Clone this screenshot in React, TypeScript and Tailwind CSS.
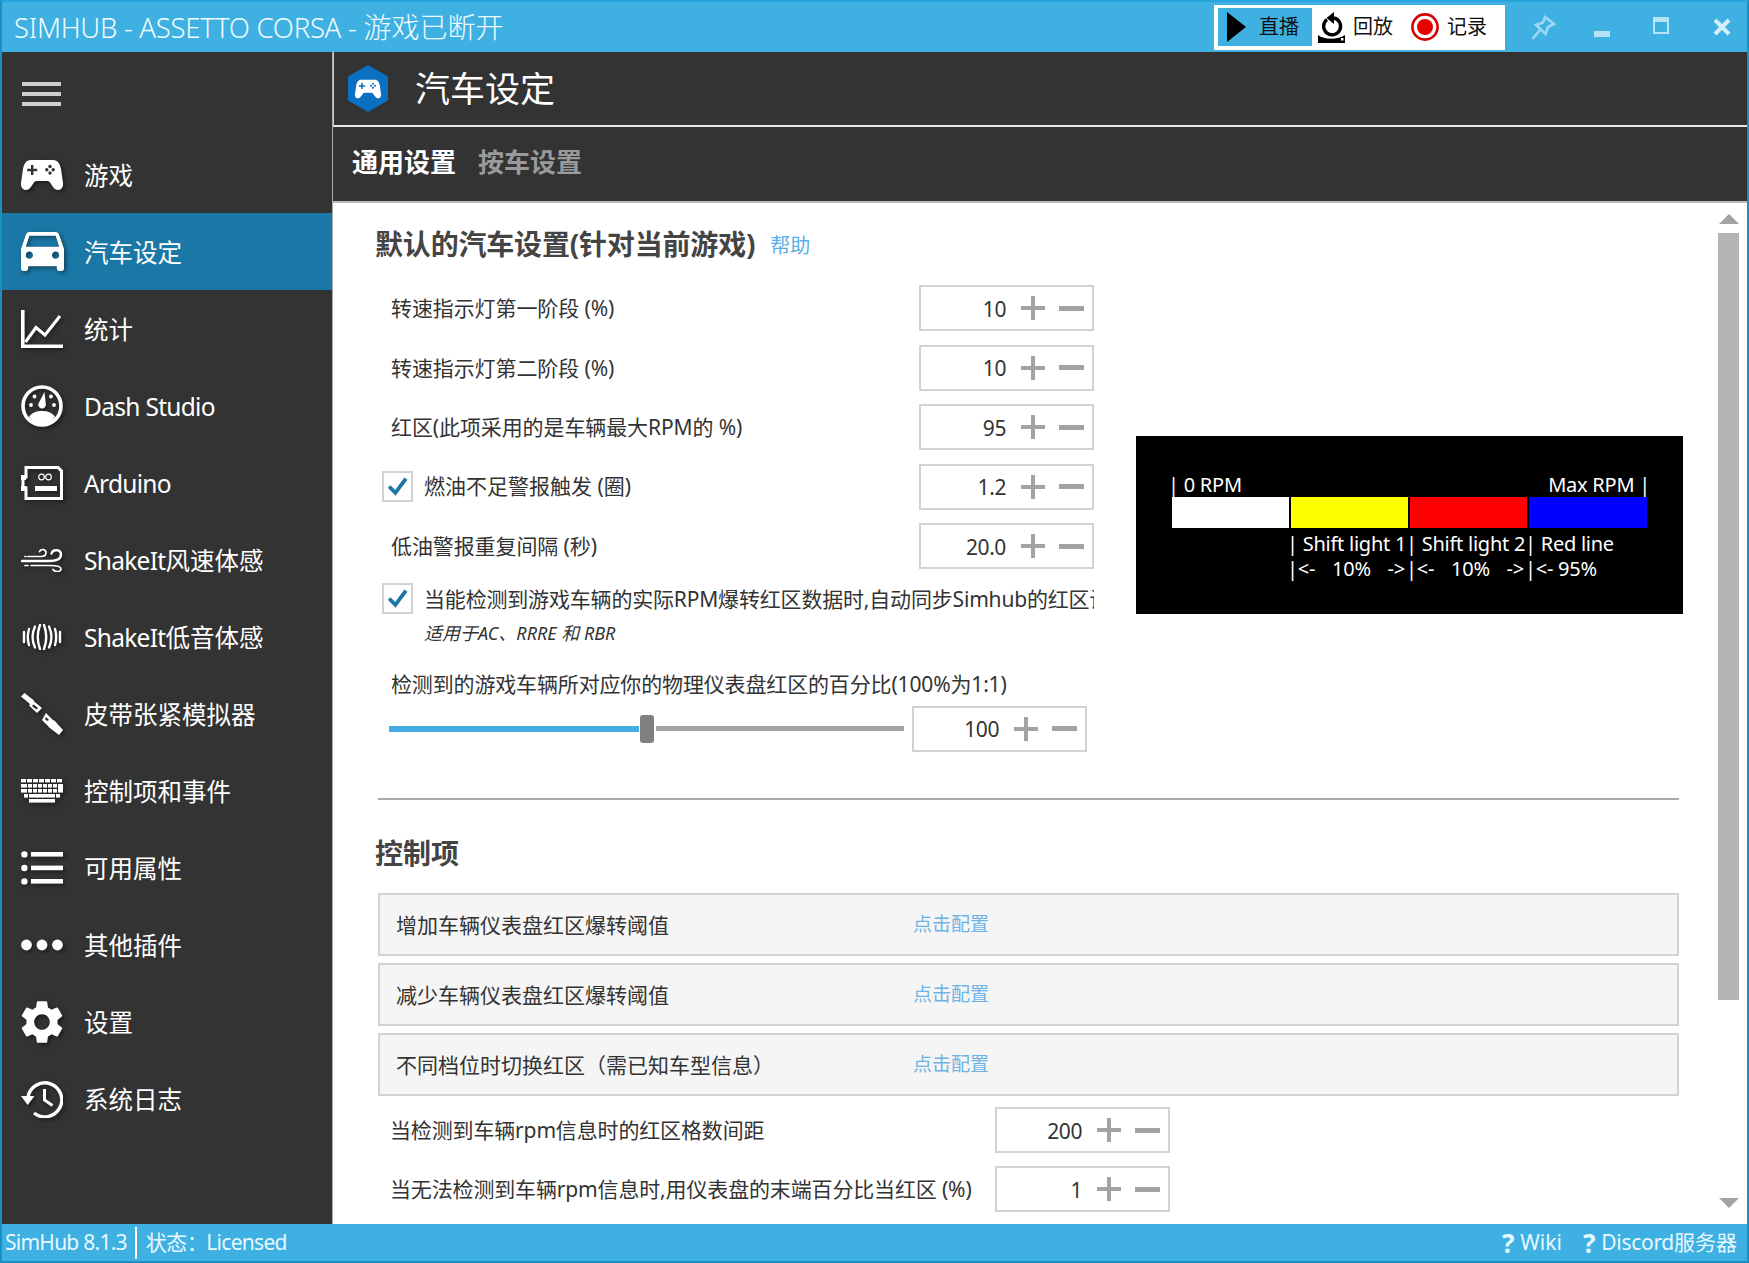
import React from 'react'
import { MdSettings } from 'react-icons/md'

const shadow = 'drop-shadow-[2px_2px_2px_rgba(0,0,0,0.45)]'

const Gamepad = ({ className, hole = '#333333' }: { className?: string; hole?: string }) => (
  <svg viewBox="0 0 42 32" className={className}>
    <path
      fill="currentColor"
      d="M10 1H32C37 1 39 5 40 10L42 24C42.5 29 40 31 37 31C34 31 32 28 30 25C29 23 28 22 26 22H16C14 22 13 23 12 25C10 28 8 31 5 31C2 31 -.5 29 0 24L2 10C3 5 5 1 10 1Z"
    />
    <path fill={hole} d="M10 6h2.4v3.8h3.8v2.4h-3.8V16H10v-3.8H6.2V9.8H10z" />
    <circle cx="29" cy="7.5" r="1.7" fill={hole} />
    <circle cx="29" cy="14" r="1.7" fill={hole} />
    <circle cx="25.8" cy="10.8" r="1.7" fill={hole} />
    <circle cx="32.2" cy="10.8" r="1.7" fill={hole} />
  </svg>
)

const CarIcon = () => (
  <svg viewBox="3 5 18 16" preserveAspectRatio="none" className={`w-[43px] h-[39px] text-white ${shadow}`}>
    <path
      fill="currentColor"
      d="M18.92 6.01C18.72 5.42 18.16 5 17.5 5h-11c-.66 0-1.21.42-1.42 1.01L3 12v8c0 .55.45 1 1 1h1c.55 0 1-.45 1-1v-1h12v1c0 .55.45 1 1 1h1c.55 0 1-.45 1-1v-8l-2.08-5.99zM6.5 16c-.83 0-1.5-.67-1.5-1.5S5.67 13 6.5 13s1.5.67 1.5 1.5S7.33 16 6.5 16zm11 0c-.83 0-1.5-.67-1.5-1.5s.67-1.5 1.5-1.5 1.5.67 1.5 1.5-.67 1.5-1.5 1.5zM5 11l1.5-4.5h11L19 11H5z"
    />
  </svg>
)

const ChartIcon = () => (
  <svg viewBox="0 0 42 38" className={`w-[42px] h-[38px] text-white ${shadow}`}>
    <path fill="none" stroke="currentColor" strokeWidth="3.6" d="M1.8 0V36.2H42" />
    <path fill="none" stroke="currentColor" strokeWidth="3" d="M4.5 32L15 17.5 24 25 39 6" />
  </svg>
)

const DashIcon = () => (
  <svg viewBox="0 0 42 42" className={`w-[42px] h-[42px] text-white ${shadow}`}>
    <circle cx="21" cy="21" r="19" fill="none" stroke="currentColor" strokeWidth="3.6" />
    <path fill="currentColor" d="M8 32C11 27 16 26 21 26S31 27 34 32C30 37 26 39 21 39S12 37 8 32Z" />
    <path fill="currentColor" d="M23.5 7L24.8 19A3.8 3.8 0 1 1 18 17.5Z" />
    <circle cx="10" cy="20" r="1.9" fill="currentColor" />
    <circle cx="13.5" cy="11.5" r="1.9" fill="currentColor" />
    <circle cx="30" cy="11.5" r="1.9" fill="currentColor" />
    <circle cx="33" cy="20" r="1.9" fill="currentColor" />
  </svg>
)

const ArduinoIcon = () => (
  <svg viewBox="0 0 42 34" className={`w-[42px] h-[34px] text-white ${shadow}`}>
    <path fill="none" stroke="currentColor" strokeWidth="3" d="M5 1.6H37L40.5 5V32.4H5V22H2V11H5Z" />
    <path fill="currentColor" d="M0 9h5v5H0zM0 20h5v5H0zM14 20h22v5H14z" />
    <circle cx="20.5" cy="11" r="2.8" fill="none" stroke="currentColor" strokeWidth="1.2" />
    <circle cx="27.5" cy="11" r="2.8" fill="none" stroke="currentColor" strokeWidth="1.2" />
  </svg>
)

const WindIcon = () => (
  <svg viewBox="0 0 42 24" className={`w-[42px] h-[24px] text-white ${shadow}`}>
    <g fill="none" stroke="currentColor" strokeWidth="1.7" strokeLinecap="round">
      <path strokeWidth="2.4" d="M1 13H28C33 13 40 12 40 6.5 40 1.5 32 .5 30.5 5.5" />
      <path d="M7 8.5H20C22.5 8.5 25 7.5 25 4.5 25 1 20 .5 18.5 3.5" />
      <path d="M4 8.5H5M10 17.5H29C35 17.5 40 18 40 21 40 24 34 24.5 32 21.5M4 17.5H7" />
    </g>
  </svg>
)

const BassIcon = () => (
  <svg viewBox="0 0 40 26" className={`w-[40px] h-[26px] text-white ${shadow}`}>
    <g fill="none" stroke="currentColor" strokeWidth="2.4" strokeLinecap="round">
      <path d="M2 8V18M7 5C5.5 10 5.5 16 7 21M13 2.5C10 9 10 17 13 23.5" />
      <path d="M18 1C15 9 15 17 18 25M22 1C25 9 25 17 22 25" />
      <path d="M27 2.5C30 9 30 17 27 23.5M33 5C34.5 10 34.5 16 33 21M38 8V18" />
    </g>
  </svg>
)

const BeltIcon = () => (
  <svg viewBox="0 0 42 42" className={`w-[42px] h-[42px] text-white ${shadow}`}>
    <path fill="currentColor" d="M3.5 0L13 7.5 9.5 11.5 0 3.5Z" />
    <path fill="currentColor" fillRule="evenodd" d="M12 7.5L21 15 16 20 8 12.5ZM12.5 11.5L11 13 15.5 16.5 17 15Z" />
    <path fill="currentColor" fillRule="evenodd" d="M25 20L34 29 28 34 21 27ZM25 24L24 26 26 28 28 27Z" />
    <path fill="currentColor" d="M33 27L42 37 38 42 27.5 34Z" />
  </svg>
)

const KeyboardIcon = () => (
  <svg viewBox="0 0 42 24" className={`w-[42px] h-[24px] text-white ${shadow}`}>
    <g fill="currentColor">
      {[0, 6, 12, 18, 24, 30, 36].map((x) => (
        <rect key={x} x={x} y="0" width="5" height="3.4" />
      ))}
      {[0, 7, 12, 17, 22, 27, 32].map((x, i) => (
        <rect key={x} x={x} y="5" width={i === 0 ? 6 : 4} height="3.6" />
      ))}
      <rect x="37" y="5" width="5" height="8.6" />
      <rect x="0" y="10" width="6" height="3.6" />
      {[7, 12, 17, 22, 27, 32].map((x) => (
        <rect key={x} x={x} y="10" width="4" height="3.6" />
      ))}
      <rect x="3" y="15" width="4" height="3.6" />
      <rect x="8" y="15" width="26" height="3.6" />
      <rect x="35" y="15" width="4" height="3.6" />
      <rect x="8" y="20" width="26" height="3.6" />
    </g>
  </svg>
)

const ListIcon = () => (
  <svg viewBox="0 0 42 34" className={`w-[42px] h-[34px] text-white ${shadow}`}>
    <g fill="currentColor">
      <circle cx="3.4" cy="3.4" r="3.2" />
      <circle cx="3.4" cy="17" r="3.2" />
      <circle cx="3.4" cy="30.4" r="3.2" />
      <rect x="10" y="1" width="32" height="4.6" />
      <rect x="10" y="14.6" width="32" height="4.6" />
      <rect x="10" y="28" width="32" height="4.6" />
    </g>
  </svg>
)

const DotsIcon = () => (
  <svg viewBox="0 0 42 12" className={`w-[42px] h-[12px] text-white ${shadow}`}>
    <circle cx="5.5" cy="6" r="5.4" fill="currentColor" />
    <circle cx="21" cy="6" r="5.4" fill="currentColor" />
    <circle cx="36.5" cy="6" r="5.4" fill="currentColor" />
  </svg>
)

const HistoryIcon = () => (
  <svg viewBox="0 0 42 38" className={`w-[42px] h-[38px] text-white ${shadow}`}>
    <path fill="none" stroke="currentColor" strokeWidth="3.4" d="M7 17A17 17 0 1 1 13 33" />
    <path fill="currentColor" d="M0 16H13.5L6.7 25Z" />
    <path fill="none" stroke="currentColor" strokeWidth="3" d="M23.5 9V20L31.5 25.5" />
  </svg>
)

const navItems: { latin?: string; label: string; icon: React.ReactNode; active?: boolean }[] = [
  { label: '游戏', icon: <Gamepad className={`w-[42px] h-[32px] text-white ${shadow}`} /> },
  { label: '汽车设定', icon: <CarIcon />, active: true },
  { label: '统计', icon: <ChartIcon /> },
  { latin: 'Dash Studio', label: '', icon: <DashIcon /> },
  { latin: 'Arduino', label: '', icon: <ArduinoIcon /> },
  { latin: 'ShakeIt', label: '风速体感', icon: <WindIcon /> },
  { latin: 'ShakeIt', label: '低音体感', icon: <BassIcon /> },
  { label: '皮带张紧模拟器', icon: <BeltIcon /> },
  { label: '控制项和事件', icon: <KeyboardIcon /> },
  { label: '可用属性', icon: <ListIcon /> },
  { label: '其他插件', icon: <DotsIcon /> },
  { label: '设置', icon: <MdSettings className={`w-[52px] h-[52px] shrink-0 text-white ${shadow}`} /> },
  { label: '系统日志', icon: <HistoryIcon /> }
]

const Spinner = ({ value, className = '' }: { value: string; className?: string }) => (
  <div className={`w-[175px] h-[46px] border-2 border-[#d2d2d2] flex items-center justify-end pr-[8px] shrink-0 text-[21px] text-[#333333] tracking-[-0.4px] ${className}`}>
    <span className="pt-[3px]">{value}</span>
    <svg viewBox="0 0 24 24" className="w-[24px] h-[24px] ml-[15px]">
      <path fill="#a3a3a3" d="M10 0h4v10h10v4H14v10h-4V14H0v-4h10z" />
    </svg>
    <span className="w-[25px] h-[5px] bg-[#a3a3a3] ml-[14px]" />
  </div>
)

const SettingRow = ({ label, value }: { label: string; value: string }) => (
  <div className="flex items-center justify-between h-[46px] mb-[13.5px] pl-[16px]">
    <span className="pt-[2px] text-[21px] text-[#333333] whitespace-nowrap tracking-[-0.1px]">{label}</span>
    <Spinner value={value} />
  </div>
)

const Check = () => (
  <span className="w-[31px] h-[31px] border-2 border-[#d2d2d2] flex items-center justify-center shrink-0">
    <svg viewBox="0 0 20 18" className="w-[21px] h-[19px]">
      <path fill="none" stroke="#1b78a6" strokeWidth="3.6" d="M2 9L8 15 18 1.5" />
    </svg>
  </span>
)

const ControlRow = ({ label }: { label: string }) => (
  <div className="h-[63px] mb-[7px] ml-[3px] border-2 border-[#d2d2d2] bg-[#f5f5f5] flex items-center pl-[16px]">
    <span className="w-[517px] pt-[3px] text-[21px] text-[#333333]">{label}</span>
    <span className="pt-[1px] text-[19px] text-[#6db3e6]">点击配置</span>
  </div>
)

const RpmMarks = ({ value }: { value: string }) => (
  <span className="w-[119px] pr-[1px] flex justify-between">
    <span>|&lt;-</span>
    <span>{value}</span>
    <span>-&gt;</span>
  </span>
)

const App = () => {
  return (
    <div className="w-[1749px] h-[1263px] flex flex-col overflow-hidden bg-white border-x-2 border-t-2 border-b-2 border-x-[#1b8ec4] border-t-[#29a3dc] border-b-[#1b8ec4] font-['Noto_Sans','Noto_Sans_CJK_SC',sans-serif]">
      {/* Title bar */}
      <div className="h-[50px] shrink-0 bg-[#3eb0e2] flex items-center pl-[12px] pr-[16px]">
        <span className="text-[27.5px] font-light text-[#f2fbff] whitespace-nowrap">
          <span className="tracking-[-0.28px]">SIMHUB - ASSETTO CORSA - </span>
          <span className="text-[28px]">游戏已断开</span>
        </span>
        <div className="ml-auto w-[291px] h-[45px] bg-white flex items-center pl-[4px] text-[20px] text-[#111111]">
          <div className="w-[94px] h-[38px] bg-[#3eb0e2] flex items-center pl-[9px]">
            <svg viewBox="0 0 19 30" className="w-[19px] h-[30px]">
              <path d="M0 0L19 15 0 30z" fill="#000000" />
            </svg>
            <span className="ml-[13px]">直播</span>
          </div>
          <svg viewBox="0 0 27 32" className="w-[27px] h-[32px] ml-[6px]">
            <path fill="none" stroke="#000000" strokeWidth="3.4" d="M9 8.5A8.5 8.5 0 1 0 16 7" />
            <path d="M16 1V13L8.5 7z" fill="#000000" />
            <path d="M0 24C6 29 20 29 27 24V32H0z" fill="#000000" />
            <rect x="23" y="27" width="2.5" height="2.5" fill="#ffffff" />
          </svg>
          <span className="ml-[8px]">回放</span>
          <svg viewBox="0 0 28 28" className="w-[28px] h-[28px] ml-[18px]">
            <circle cx="14" cy="14" r="12.6" fill="#ffffff" stroke="#d60000" strokeWidth="2.6" />
            <circle cx="14" cy="14" r="8" fill="#e60000" />
          </svg>
          <span className="ml-[8px]">记录</span>
        </div>
        <div className="flex items-center">
          <svg viewBox="0 0 26 28" className="w-[26px] h-[28px] ml-[26px]">
            <g fill="none" stroke="#9fd8f3" strokeWidth="2.6">
              <path d="M14 4L23 11 17 14 14.5 21 5 12 12 9.5Z" />
              <path d="M9 17L1.5 26" />
            </g>
          </svg>
          <span className="w-[16px] h-[6px] bg-[#b5e3f8] ml-[37px] mt-[13px]" />
          <span className="w-[16px] h-[17px] border-2 border-t-[5px] border-[#b5e3f8] ml-[43px] -mt-[4px]" />
          <svg viewBox="0 0 18 18" className="w-[18px] h-[18px] ml-[44px]">
            <path d="M2 2L16 16M16 2L2 16" stroke="#d4f0fc" strokeWidth="4" />
          </svg>
        </div>
      </div>

      <div className="flex-1 flex min-h-0">
        {/* Sidebar */}
        <div className="w-[331px] shrink-0 bg-[#333333] border-r border-r-[#aaaaaa] flex flex-col">
          <div className="h-[84px] shrink-0 flex flex-col justify-center gap-[6px] pl-[20px]">
            <span className="w-[39px] h-[4px] bg-[#cfcfcf]" />
            <span className="w-[39px] h-[4px] bg-[#cfcfcf]" />
            <span className="w-[39px] h-[4px] bg-[#cfcfcf]" />
          </div>
          {navItems.map((item) => (
            <div key={item.latin + item.label} className={`h-[77px] shrink-0 flex items-center ${item.active ? 'bg-[#1b78a6]' : ''}`}>
              <div className="w-[82px] shrink-0 flex justify-start pl-[18px]">
                <div className="w-[44px] flex justify-center">{item.icon}</div>
              </div>
              <span className="pt-[3px] text-[24.5px] text-white whitespace-nowrap">
                {item.latin && <span className="tracking-[-0.7px]">{item.latin}</span>}
                {item.label}
              </span>
            </div>
          ))}
        </div>

        {/* Main */}
        <div className="flex-1 min-w-0 flex flex-col bg-[#333333]">
          <div className="h-[75px] shrink-0 border-b-2 border-b-[#e8e8e8] border-l border-l-[#cccccc] flex items-center pl-[14px]">
            <div className="relative w-[40px] h-[47px] flex items-center justify-center">
              <svg viewBox="0 0 40 47" className="absolute inset-0 w-[40px] h-[47px]">
                <path d="M20 0L40 11.5V35.5L20 47 0 35.5V11.5Z" fill="#0b6fc2" />
              </svg>
              <Gamepad className="relative w-[26px] h-[20px] text-white" hole="#0b6fc2" />
            </div>
            <span className="ml-[27px] pt-[2px] text-[35px] text-white">汽车设定</span>
          </div>
          <div className="h-[76px] shrink-0 border-b-2 border-b-[#bbbbbb] flex items-center pl-[19px] pb-[3px] gap-[22px] text-[26px] font-bold">
            <span className="text-white">通用设置</span>
            <span className="text-[#9a9a9a]">按车设置</span>
          </div>

          <div className="flex-1 min-h-0 bg-white flex">
            <div className="flex-1 min-w-0 pl-[42px] pr-[4px] overflow-hidden">
              <div className="flex items-center h-[44px] mt-[21px] mb-[17px]">
                <span className="pb-[4px] text-[28px] font-bold tracking-[-0.18px] text-[#444444]">默认的汽车设置(针对当前游戏)</span>
                <span className="ml-[15px] text-[20px] text-[#5aaee6]">帮助</span>
              </div>

              <div className="flex">
                <div className="w-[719px] shrink-0">
                  <SettingRow label="转速指示灯第一阶段 (%)" value="10" />
                  <SettingRow label="转速指示灯第二阶段 (%)" value="10" />
                  <SettingRow label="红区(此项采用的是车辆最大RPM的 %)" value="95" />
                  <div className="flex items-center justify-between h-[46px] mb-[13.5px] pl-[7px]">
                    <div className="flex items-center gap-[11px]">
                      <Check />
                      <span className="text-[21px] text-[#333333]">燃油不足警报触发 (圈)</span>
                    </div>
                    <Spinner value="1.2" />
                  </div>
                  <SettingRow label="低油警报重复间隔 (秒)" value="20.0" />

                  <div className="flex items-center gap-[11px] h-[31px] pl-[7px] mt-[2px] overflow-hidden">
                    <Check />
                    <span className="pt-[3px] text-[21px] text-[#333333] whitespace-nowrap tracking-[-0.18px]">当能检测到游戏车辆的实际RPM爆转红区数据时,自动同步Simhub的红区设置</span>
                  </div>
                  <div className="pl-[49px] mt-[6px] h-[28px] text-[18px] italic text-[#333333]">适用于AC、RRRE 和 RBR</div>

                  <div className="pl-[16px] mt-[21px] h-[32px] text-[21px] text-[#333333] tracking-[-0.15px]">检测到的游戏车辆所对应你的物理仪表盘红区的百分比(100%为1:1)</div>
                  <div className="flex items-center mt-[5px] pl-[14px] w-[712px]">
                    <div className="flex-1 flex items-center">
                      <span className="w-[250px] h-[6px] bg-[#44aee2]" />
                      <span className="w-[14px] h-[28px] bg-[#808080] rounded-[3px] ml-[1px]" />
                      <span className="flex-1 h-[5px] bg-[#a3a3a3] ml-[2px] mr-[8px]" />
                    </div>
                    <Spinner value="100" />
                  </div>
                </div>

                <div className="w-[547px] h-[178px] bg-black ml-[42px] mt-[151px] pt-[36px] pl-[36px] text-[20px] text-white leading-[25px] shrink-0 tracking-[-0.25px]">
                  <div className="w-[482px] -ml-[4px] flex justify-between whitespace-pre">
                    <span>| 0 RPM</span>
                    <span>Max RPM |</span>
                  </div>
                  <div className="flex gap-[2px] w-[475px]">
                    <span className="w-[117px] h-[31px] bg-white" />
                    <span className="w-[117px] h-[31px] bg-[#ffff00]" />
                    <span className="w-[117px] h-[31px] bg-[#ff0000]" />
                    <span className="w-[118px] h-[31px] bg-[#0000ff]" />
                  </div>
                  <div className="flex pl-[115px] mt-[3px] whitespace-nowrap">
                    <span className="w-[119px]">| Shift light 1</span>
                    <span className="w-[119px]">| Shift light 2</span>
                    <span>| Red line</span>
                  </div>
                  <div className="flex pl-[115px] whitespace-nowrap">
                    <RpmMarks value="10%" />
                    <RpmMarks value="10%" />
                    <span>|&lt;- 95%</span>
                  </div>
                </div>
              </div>

              <div className="h-[2px] ml-[3px] bg-[#aaaaaa] mt-[46px]" />

              <div className="h-[44px] mt-[33px] mb-[16px] flex items-center text-[28px] font-bold text-[#444444]">
                <span className="pb-[3px]">控制项</span>
              </div>
              <ControlRow label="增加车辆仪表盘红区爆转阈值" />
              <ControlRow label="减少车辆仪表盘红区爆转阈值" />
              <ControlRow label="不同档位时切换红区（需已知车型信息）" />

              <div className="w-[795px] flex items-center justify-between h-[45px] mt-[12px] mb-[14px] pl-[15px]">
                <span className="pt-[2px] text-[21px] text-[#333333] tracking-[-0.15px]">当检测到车辆rpm信息时的红区格数间距</span>
                <Spinner value="200" />
              </div>
              <div className="w-[795px] flex items-center justify-between h-[45px] pl-[15px]">
                <span className="pt-[2px] text-[21px] text-[#333333] whitespace-nowrap tracking-[-0.15px]">当无法检测到车辆rpm信息时,用仪表盘的末端百分比当红区 (%)</span>
                <Spinner value="1" />
              </div>
            </div>

            {/* Scrollbar */}
            <div className="w-[64px] shrink-0 flex flex-col items-start pl-[35px] pt-[11px] pb-[16px]">
              <span className="w-0 h-0 ml-[1px] border-x-[10px] border-x-transparent border-b-[10px] border-b-[#a3a3a3]" />
              <span className="w-[21px] h-[767px] bg-[#b5b5b5] mt-[9px]" />
              <span className="mt-auto w-0 h-0 ml-[1px] border-x-[10px] border-x-transparent border-t-[10px] border-t-[#a3a3a3]" />
            </div>
          </div>
        </div>
      </div>

      {/* Status bar */}
      <div className="h-[37px] shrink-0 bg-[#3eb0e2] flex items-center pl-[3px] pr-[10px] pt-[1px] text-[21px] text-[#e8f8ff]">
        <span className="tracking-[-0.75px]">SimHub 8.1.3</span>
        <span className="w-[2px] h-[32px] bg-white ml-[8px] mr-[9px]" />
        <span className="tracking-[-0.5px]">状态：</span>
        <span className="tracking-[-0.7px] -ml-[1px]">Licensed</span>
        <span className="ml-auto font-bold mr-[6px] text-[26px] leading-none">?</span>
        <span className="mr-[1px]">Wiki</span>
        <span className="ml-[20px] font-bold mr-[6px] text-[26px] leading-none">?</span>
        <span>
          <span className="tracking-[-0.3px]">Discord</span>服务器
        </span>
      </div>
    </div>
  )
}

export default App
